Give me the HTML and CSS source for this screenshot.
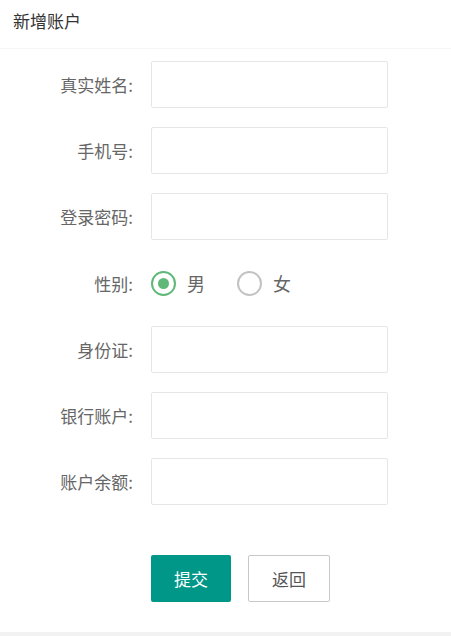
FILE: index.html
```html
<!DOCTYPE html>
<html lang="zh-CN">
<head>
<meta charset="utf-8">
<title>新增账户</title>
<link rel="stylesheet" href="styles.css">
</head>
<body>
<div class="card">
  <div class="card-header">新增账户</div>
  <form class="card-body">
    <div class="form-item">
      <label class="form-label">真实姓名:</label>
      <input class="form-input" type="text">
    </div>
    <div class="form-item">
      <label class="form-label">手机号:</label>
      <input class="form-input" type="text">
    </div>
    <div class="form-item">
      <label class="form-label">登录密码:</label>
      <input class="form-input" type="password">
    </div>
    <div class="form-item">
      <label class="form-label">性别:</label>
      <div class="radio-group">
        <span class="radio checked"><i class="radio-icon"></i><span class="radio-text">男</span></span>
        <span class="radio"><i class="radio-icon"></i><span class="radio-text">女</span></span>
      </div>
    </div>
    <div class="form-item">
      <label class="form-label">身份证:</label>
      <input class="form-input" type="text">
    </div>
    <div class="form-item">
      <label class="form-label">银行账户:</label>
      <input class="form-input" type="text">
    </div>
    <div class="form-item">
      <label class="form-label">账户余额:</label>
      <input class="form-input" type="text">
    </div>
    <div class="form-actions">
      <button class="btn btn-primary" type="button">提交</button>
      <button class="btn btn-default" type="button">返回</button>
    </div>
  </form>
</div>
</body>
</html>
```
FILE: styles.css
```css
* { box-sizing: border-box; }
html, body {
  margin: 0;
  padding: 0;
  background: #f2f2f2;
  font-family: "Noto Sans CJK SC", "Noto Sans", sans-serif;
}
.card {
  background: #fff;
  height: 632px;
}
.card-header {
  height: 49px;
  line-height: 41px;
  padding-left: 13px;
  font-size: 17px;
  color: #333;
  border-bottom: 1px solid #f6f6f6;
}
.card-body {
  margin: 0;
  padding-top: 12px;
  display: flex;
  flex-direction: column;
  gap: 19.2px;
}
.form-item {
  display: flex;
  align-items: center;
  height: 47px;
}
.form-label {
  width: 134px;
  padding-right: 1px;
  text-align: right;
  font-size: 17px;
  color: #666;
  margin-right: 17px;
}
.form-input {
  width: 237px;
  height: 47px;
  border: 1px solid #e6e6e6;
  border-radius: 2px;
  background: #fff;
  outline: none;
  font-size: 16px;
  padding: 0 12px;
}
.radio-group {
  display: flex;
  align-items: center;
  gap: 32px;
}
.radio {
  display: flex;
  align-items: center;
  gap: 11px;
}
.radio-icon {
  width: 25px;
  height: 25px;
  border-radius: 50%;
  border: 2px solid #c2c2c2;
  display: flex;
  align-items: center;
  justify-content: center;
}
.radio.checked .radio-icon {
  border-color: #5fb878;
}
.radio.checked .radio-icon::after {
  content: "";
  width: 11px;
  height: 11px;
  border-radius: 50%;
  background: #5fb878;
}
.radio-text {
  font-size: 18px;
  color: #666;
}
.form-actions {
  display: flex;
  gap: 17px;
  padding-left: 151px;
  margin-top: 31px;
}
.btn {
  height: 47px;
  border-radius: 2px;
  font-size: 17px;
  font-family: inherit;
  padding: 0;
  cursor: pointer;
}
.btn-primary {
  width: 80px;
  background: #009688;
  color: #fff;
  border: none;
}
.btn-default {
  width: 82px;
  background: #fff;
  color: #555;
  border: 1px solid #c9c9c9;
}
```
